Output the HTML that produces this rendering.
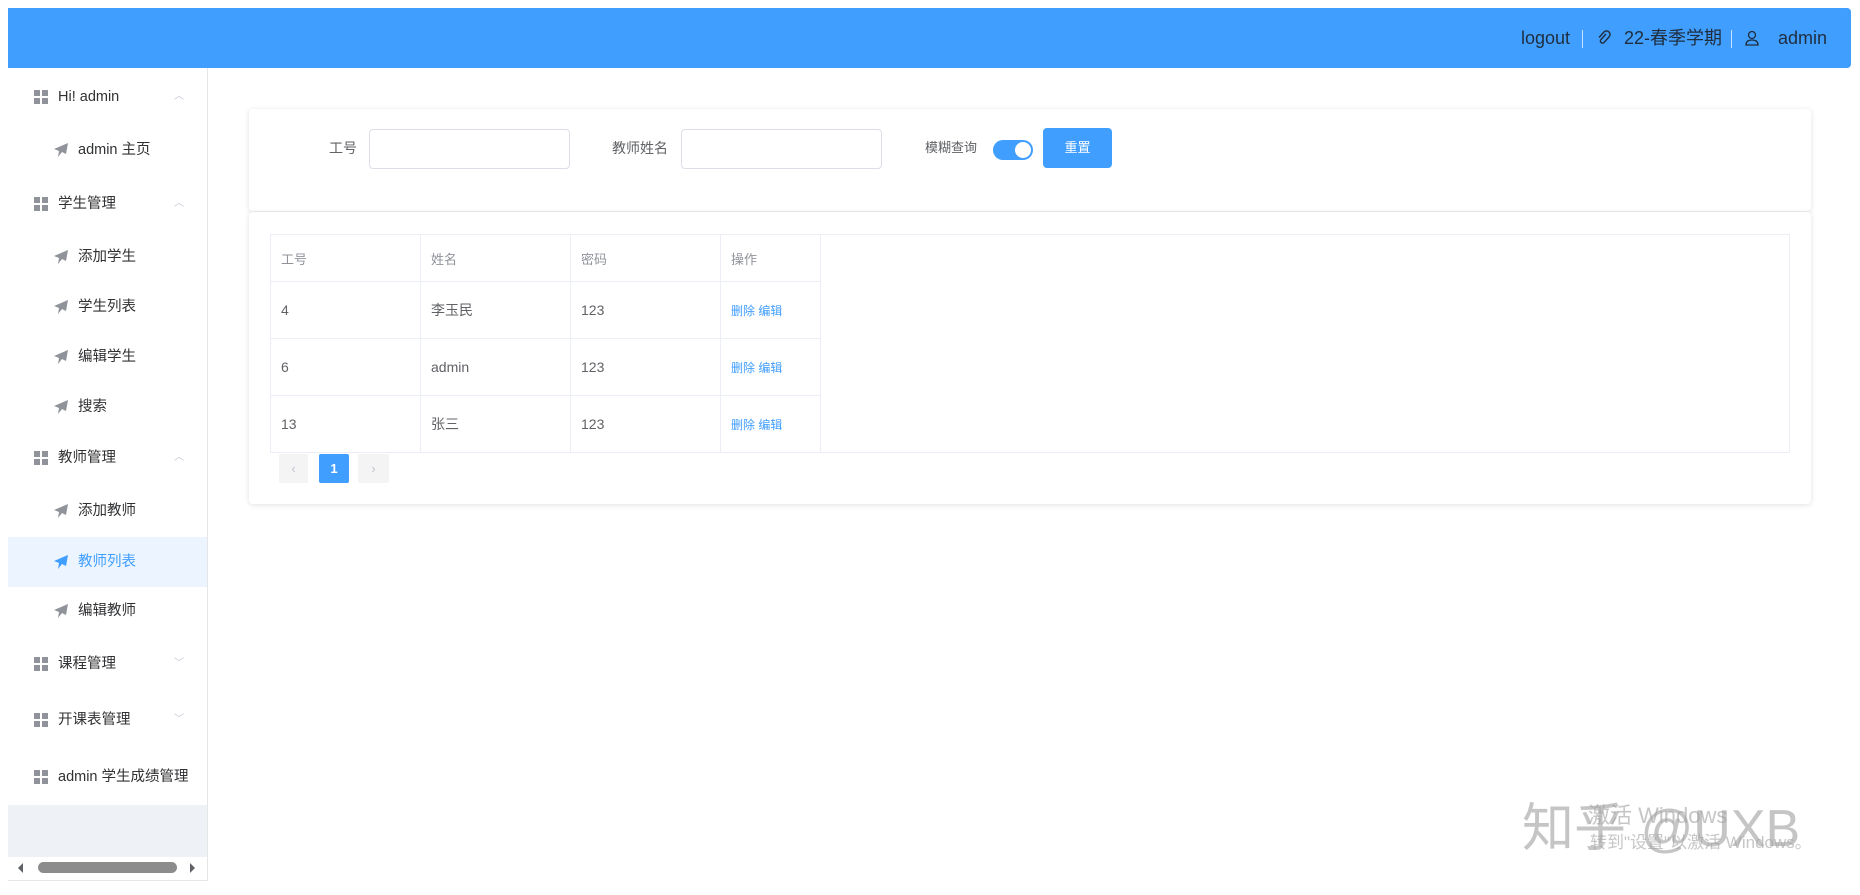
<!DOCTYPE html>
<html><head><meta charset="utf-8">
<style>
*{margin:0;padding:0;box-sizing:border-box}
body{width:1860px;height:895px;background:#fff;position:relative;overflow:hidden;font-family:"Liberation Sans","Noto Sans CJK SC",sans-serif;color:#303133}
.abs{position:absolute}
.hdr{left:8px;top:8px;width:1843px;height:60px;background:#409eff;border-radius:0 4px 4px 0}
.hdr .t{position:absolute;top:0;line-height:60px;font-size:18px;color:#1f2d3d}
.side{left:8px;top:68px;width:200px;height:813px;border-right:1px solid #e6e6e6;border-bottom:1px solid #e6e6e6;background:#fff}
.mi{position:absolute;left:0;width:199px;height:50px;line-height:50px;font-size:14.5px;color:#303133}
.grid{position:absolute;left:26px;top:18px;width:14px;height:14px}
.grid i{position:absolute;width:6px;height:6px;background:#909399}
.plane{position:absolute;left:45px;top:17px}
.arr{position:absolute;left:166px;top:0;font-size:10px;color:#c0c4cc}
.card{background:#fff;box-shadow:0 1px 6px rgba(0,0,0,.12);border-radius:4px}
.lbl{font-size:14px;color:#606266;line-height:20px}
.inp{border:1px solid #dcdfe6;border-radius:4px;height:40px;background:#fff}
table{border-collapse:collapse;font-size:14px;color:#606266}
td{border:1px solid #ebeef5;padding-left:10px}
.op{color:#409eff;font-size:12px}
</style></head><body>
<div class="abs hdr">
<span class="t" style="left:1513px">logout</span>
<span class="abs" style="left:1574px;top:22px;width:1px;height:18px;background:#c7e1ff"></span>
<svg class="abs" style="left:1588px;top:22px" width="16" height="16" viewBox="0 0 16 16"><path d="M10 4 L5 9.5 a2 2 0 0 0 3 3 L13 7 a3.5 3.5 0 0 0 -5 -5 L3 7.5" fill="none" stroke="#1f2d3d" stroke-width="1.4"/></svg>
<span class="t" style="left:1616px">22-春季学期</span>
<span class="abs" style="left:1723px;top:22px;width:1px;height:18px;background:#c7e1ff"></span>
<svg class="abs" style="left:1736px;top:21px" width="16" height="18" viewBox="0 0 16 18"><circle cx="8" cy="6" r="3.5" fill="none" stroke="#1f2d3d" stroke-width="1.3"/><path d="M2 16 Q2 11 8 11 Q14 11 14 16 Z" fill="none" stroke="#1f2d3d" stroke-width="1.3"/></svg>
<span class="t" style="left:1770px">admin</span>
</div>

<div class="abs side">
 <div class="mi" style="top:4px"><div class="grid"><i style="left:0;top:0"></i><i style="left:8px;top:0"></i><i style="left:0;top:8px"></i><i style="left:8px;top:8px"></i></div><span style="position:absolute;left:50px">Hi! admin</span><span class="arr">︿</span></div>
 <div class="mi" style="top:57px"><svg class="plane" width="16" height="16" viewBox="0 0 16 16"><path d="M15 1 L1 7 L6 9 L5 15 L9 10 L13 12 Z" fill="#909399"/></svg><span style="position:absolute;left:70px">admin 主页</span></div>
 <div class="mi" style="top:111px"><div class="grid"><i style="left:0;top:0"></i><i style="left:8px;top:0"></i><i style="left:0;top:8px"></i><i style="left:8px;top:8px"></i></div><span style="position:absolute;left:50px">学生管理</span><span class="arr">︿</span></div>
 <div class="mi" style="top:164px"><svg class="plane" width="16" height="16" viewBox="0 0 16 16"><path d="M15 1 L1 7 L6 9 L5 15 L9 10 L13 12 Z" fill="#909399"/></svg><span style="position:absolute;left:70px">添加学生</span></div>
 <div class="mi" style="top:214px"><svg class="plane" width="16" height="16" viewBox="0 0 16 16"><path d="M15 1 L1 7 L6 9 L5 15 L9 10 L13 12 Z" fill="#909399"/></svg><span style="position:absolute;left:70px">学生列表</span></div>
 <div class="mi" style="top:264px"><svg class="plane" width="16" height="16" viewBox="0 0 16 16"><path d="M15 1 L1 7 L6 9 L5 15 L9 10 L13 12 Z" fill="#909399"/></svg><span style="position:absolute;left:70px">编辑学生</span></div>
 <div class="mi" style="top:314px"><svg class="plane" width="16" height="16" viewBox="0 0 16 16"><path d="M15 1 L1 7 L6 9 L5 15 L9 10 L13 12 Z" fill="#909399"/></svg><span style="position:absolute;left:70px">搜索</span></div>
 <div class="mi" style="top:365px"><div class="grid"><i style="left:0;top:0"></i><i style="left:8px;top:0"></i><i style="left:0;top:8px"></i><i style="left:8px;top:8px"></i></div><span style="position:absolute;left:50px">教师管理</span><span class="arr">︿</span></div>
 <div class="mi" style="top:418px"><svg class="plane" width="16" height="16" viewBox="0 0 16 16"><path d="M15 1 L1 7 L6 9 L5 15 L9 10 L13 12 Z" fill="#909399"/></svg><span style="position:absolute;left:70px">添加教师</span></div>
 <div class="mi" style="top:469px;background:#ecf5ff;color:#409eff"><svg class="plane" width="16" height="16" viewBox="0 0 16 16"><path d="M15 1 L1 7 L6 9 L5 15 L9 10 L13 12 Z" fill="#409eff"/></svg><span style="position:absolute;left:70px">教师列表</span></div>
 <div class="mi" style="top:518px"><svg class="plane" width="16" height="16" viewBox="0 0 16 16"><path d="M15 1 L1 7 L6 9 L5 15 L9 10 L13 12 Z" fill="#909399"/></svg><span style="position:absolute;left:70px">编辑教师</span></div>
 <div class="mi" style="top:571px"><div class="grid"><i style="left:0;top:0"></i><i style="left:8px;top:0"></i><i style="left:0;top:8px"></i><i style="left:8px;top:8px"></i></div><span style="position:absolute;left:50px">课程管理</span><span class="arr">﹀</span></div>
 <div class="mi" style="top:627px"><div class="grid"><i style="left:0;top:0"></i><i style="left:8px;top:0"></i><i style="left:0;top:8px"></i><i style="left:8px;top:8px"></i></div><span style="position:absolute;left:50px">开课表管理</span><span class="arr">﹀</span></div>
 <div class="mi" style="top:684px"><div class="grid"><i style="left:0;top:0"></i><i style="left:8px;top:0"></i><i style="left:0;top:8px"></i><i style="left:8px;top:8px"></i></div><span style="position:absolute;left:50px">admin 学生成绩管理</span></div>
 <div class="abs" style="left:0;top:737px;width:199px;height:52px;background:#eef1f6"></div>
 <div class="abs" style="left:10px;top:795px;width:0;height:0;border-top:5px solid transparent;border-bottom:5px solid transparent;border-right:5px solid #606266"></div>
 <div class="abs" style="left:30px;top:794px;width:139px;height:11px;border-radius:6px;background:#8c8c8c"></div>
 <div class="abs" style="left:182px;top:795px;width:0;height:0;border-top:5px solid transparent;border-bottom:5px solid transparent;border-left:5px solid #606266"></div>
</div>

<div class="abs card" style="left:249px;top:109px;width:1562px;height:102px">
 <span class="abs lbl" style="left:80px;top:29px">工号</span>
 <div class="abs inp" style="left:120px;top:20px;width:201px"></div>
 <span class="abs lbl" style="left:363px;top:29px">教师姓名</span>
 <div class="abs inp" style="left:432px;top:20px;width:201px"></div>
 <span class="abs lbl" style="left:676px;top:29px;font-size:13px">模糊查询</span>
 <div class="abs" style="left:744px;top:31px;width:40px;height:20px;border-radius:10px;background:#409eff"><div class="abs" style="left:22px;top:2px;width:16px;height:16px;border-radius:50%;background:#fff"></div></div>
 <div class="abs" style="left:794px;top:19px;width:69px;height:40px;border-radius:4px;background:#409eff;color:#fff;font-size:13px;line-height:40px;text-align:center">重置</div>
</div>

<div class="abs card" style="left:249px;top:212px;width:1562px;height:292px">
 <table class="abs" style="left:21px;top:22px;width:1520px">
  <tr style="height:47px;color:#909399;font-size:13px"><td style="width:150px">工号</td><td style="width:150px">姓名</td><td style="width:150px">密码</td><td style="width:100px">操作</td><td style="border-bottom:none"></td></tr>
  <tr style="height:57px"><td>4</td><td>李玉民</td><td>123</td><td class="op">删除 编辑</td><td style="border-top:none;border-bottom:none"></td></tr>
  <tr style="height:57px"><td>6</td><td>admin</td><td>123</td><td class="op">删除 编辑</td><td style="border-top:none;border-bottom:none"></td></tr>
  <tr style="height:57px"><td>13</td><td>张三</td><td>123</td><td class="op">删除 编辑</td><td style="border-top:none"></td></tr>
 </table>
 <div class="abs" style="left:30px;top:242px;width:29px;height:29px;background:#f4f4f5;border-radius:2px;color:#c0c4cc;text-align:center;line-height:29px;font-size:13px">‹</div>
 <div class="abs" style="left:70px;top:242px;width:30px;height:29px;background:#409eff;border-radius:2px;color:#fff;text-align:center;line-height:29px;font-size:13px;font-weight:bold">1</div>
 <div class="abs" style="left:109px;top:242px;width:31px;height:29px;background:#f4f4f5;border-radius:2px;color:#c0c4cc;text-align:center;line-height:29px;font-size:13px">›</div>
</div>

<div class="abs" style="left:1522px;top:786px;font-size:52px;color:rgba(150,150,150,.55)">知乎 @UXB</div>
<div class="abs" style="left:1588px;top:798px;font-size:22px;color:rgba(160,160,160,.6)">激活 Windows</div>
<div class="abs" style="left:1590px;top:828px;font-size:17px;color:rgba(160,160,160,.6)">转到"设置"以激活 Windows。</div>
</body></html>
